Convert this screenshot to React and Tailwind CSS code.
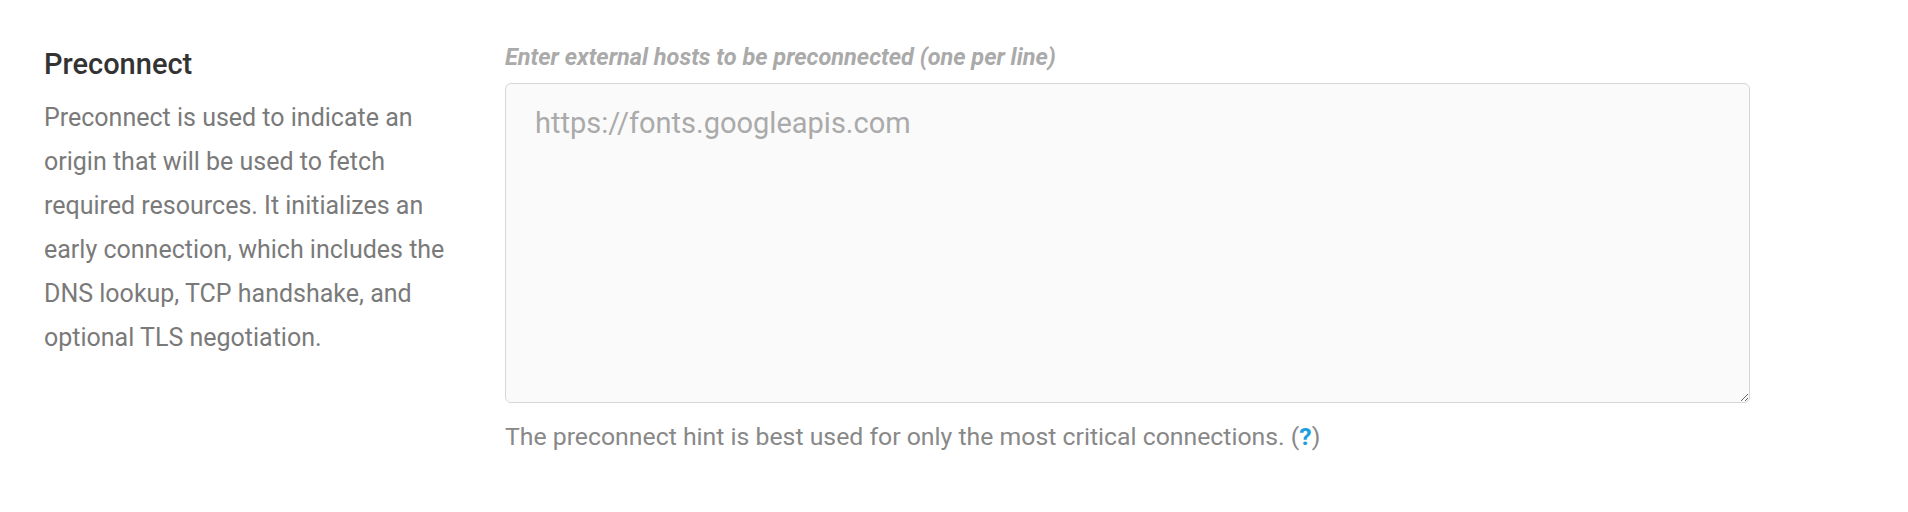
export default function App() {
  return (
    <div className="w-[1908px] h-[512px] bg-white" style={{ fontFamily: 'Roboto, "Liberation Sans", sans-serif' }}>
      <div className="flex pl-[44px] pt-[46px]">
        <div className="w-[461px] shrink-0">
          <h2 className="text-[29px] leading-[36px] font-medium text-[#333]">Preconnect</h2>
          <p className="mt-[14px] w-[420px] text-[25px] leading-[44px] text-[#7a7a7a]">
            Preconnect is used to indicate an origin that will be used to fetch required resources. It initializes an early connection, which includes the DNS lookup, TCP handshake, and optional TLS negotiation.
          </p>
        </div>
        <div className="w-[1245px] shrink-0 -mt-[3px]">
          <div className="text-[23.5px] leading-[28px] font-bold italic text-[#aaa]">
            Enter external hosts to be preconnected (one per line)
          </div>
          <textarea
            className="mt-[12px] block w-full h-[320px] bg-[#fafafa] border border-[#d6d6d6] rounded-[6px] px-[29px] pt-[21px] pb-[14px] text-[29px] leading-[36px] text-[#555] placeholder:text-[#aaa] outline-none"
            placeholder="https://fonts.googleapis.com"
          />
          <p className="mt-[18px] text-[24.8px] leading-[32px] text-[#888]">
            The preconnect hint is best used for only the most critical connections. (<a className="text-[#1e9ee0] font-bold">?</a>)
          </p>
        </div>
      </div>
    </div>
  );
}
